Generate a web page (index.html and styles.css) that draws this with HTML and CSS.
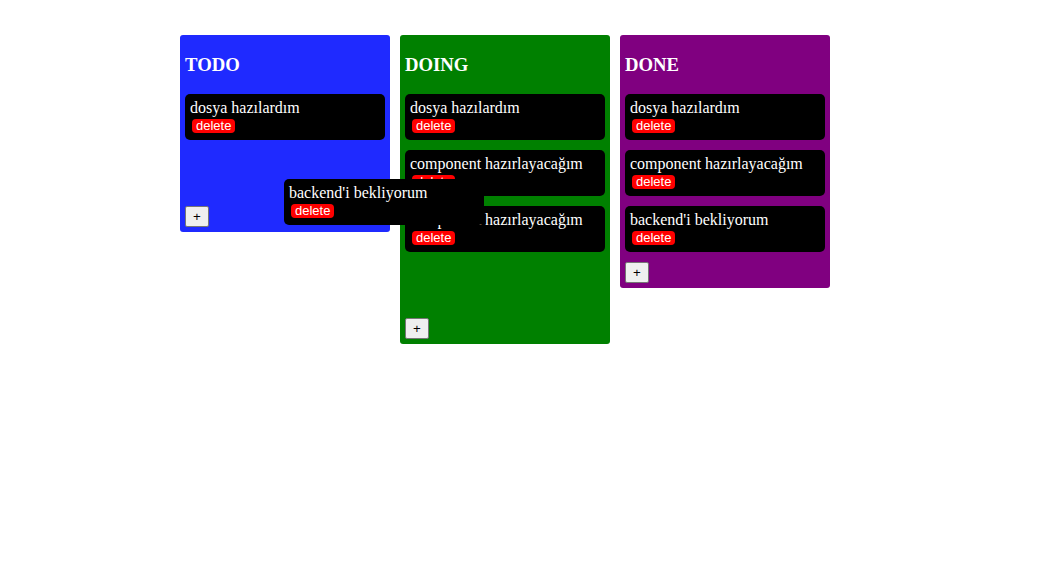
FILE: index.html
```html
<!DOCTYPE html>
<html lang="tr">
<head>
<meta charset="utf-8">
<title>Board</title>
<link rel="stylesheet" href="styles.css">
</head>
<body>
<div class="board">
  <div class="column todo">
    <h3 class="column-title">TODO</h3>
    <div class="card">
      <div class="card-text">dosya hazılardım</div>
      <button class="delete">delete</button>
    </div>
    <div class="placeholder"></div>
    <button class="add">+</button>
  </div>
  <div class="column doing">
    <h3 class="column-title">DOING</h3>
    <div class="card">
      <div class="card-text">dosya hazılardım</div>
      <button class="delete">delete</button>
    </div>
    <div class="card">
      <div class="card-text">component hazırlayacağım</div>
      <button class="delete">delete</button>
    </div>
    <div class="card">
      <div class="card-text">component hazırlayacağım</div>
      <button class="delete">delete</button>
    </div>
    <div class="placeholder"></div>
    <button class="add">+</button>
  </div>
  <div class="column done">
    <h3 class="column-title">DONE</h3>
    <div class="card">
      <div class="card-text">dosya hazılardım</div>
      <button class="delete">delete</button>
    </div>
    <div class="card">
      <div class="card-text">component hazırlayacağım</div>
      <button class="delete">delete</button>
    </div>
    <div class="card">
      <div class="card-text">backend'i bekliyorum</div>
      <button class="delete">delete</button>
    </div>
    <button class="add">+</button>
  </div>
</div>
<div class="card dragging">
  <div class="card-text">backend'i bekliyorum</div>
  <button class="delete">delete</button>
</div>
</body>
</html>
```
FILE: styles.css
```css
html, body {
  margin: 0;
  padding: 0;
  background: #ffffff;
}

body {
  position: relative;
  font-family: "Liberation Serif", "Times New Roman", serif;
  font-size: 16px;
}

.board {
  display: flex;
  align-items: flex-start;
  gap: 10px;
  padding: 35px 0 0 180px;
}

.column {
  width: 210px;
  box-sizing: border-box;
  padding: 0 5px 5px;
  border-radius: 3px;
  color: #ffffff;
}

.todo { background: #1f2aff; }
.doing { background: #008000; }
.done { background: #800080; }

.column-title {
  margin: 18.72px 0;
  font-size: 18.72px;
  font-weight: bold;
  font-family: "Liberation Serif", "Times New Roman", serif;
}

.card {
  box-sizing: border-box;
  width: 200px;
  height: 46px;
  margin-bottom: 10px;
  padding: 5px;
  background: #000000;
  color: #ffffff;
  border-radius: 5px;
}

.card-text {
  font-size: 16px;
  line-height: normal;
}

.delete {
  display: block;
  margin: 2px 2px 0;
  padding: 0 4px;
  border: none;
  border-radius: 4px;
  background: #ff0000;
  color: #ffffff;
  font-family: "Liberation Sans", Arial, sans-serif;
  font-size: 13px;
  line-height: 14px;
  height: 14px;
}

.placeholder {
  height: 46px;
  margin-bottom: 10px;
}

.add {
  display: block;
  box-sizing: border-box;
  width: 24px;
  height: 21px;
  padding: 0;
  border: 1px solid #767676;
  border-radius: 2px;
  background: #efefef;
  color: #000000;
  font-family: "Liberation Sans", Arial, sans-serif;
  font-size: 13.33px;
}

.dragging {
  position: absolute;
  left: 284px;
  top: 179px;
  margin: 0;
}
```
